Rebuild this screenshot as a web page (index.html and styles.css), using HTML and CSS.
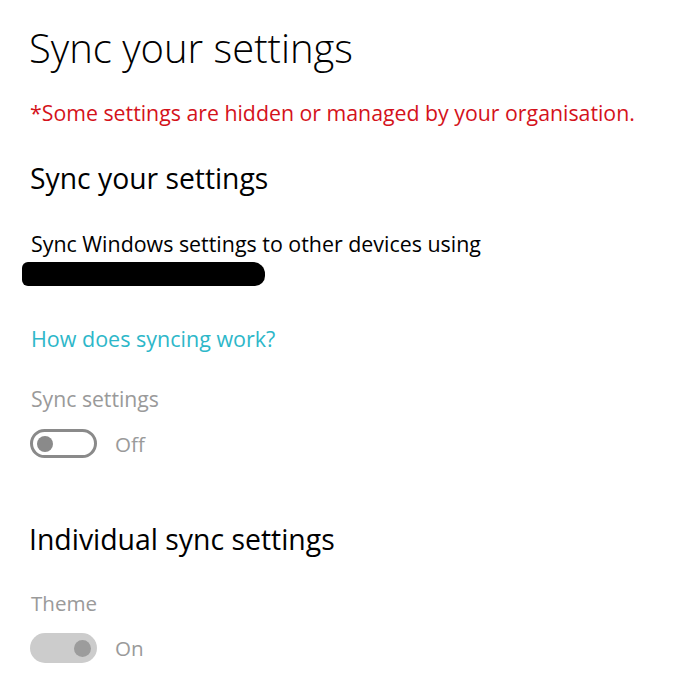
FILE: index.html
```html
<!DOCTYPE html>
<html>
<head>
<meta charset="utf-8">
<link rel="stylesheet" href="styles.css">
</head>
<body>
<main class="page">
  <h1 class="title">Sync your settings</h1>
  <p class="warning">*Some settings are hidden or managed by your organisation.</p>
  <h2 class="section">Sync your settings</h2>
  <p class="desc">Sync Windows settings to other devices using</p>
  <div class="redact"></div>
  <a class="link" href="#">How does syncing work?</a>
  <div class="setting">
    <div class="label">Sync settings</div>
    <div class="toggle-row">
      <span class="toggle off"><span class="knob"></span></span>
      <span class="state">Off</span>
    </div>
  </div>
  <h2 class="section section-2">Individual sync settings</h2>
  <div class="setting setting-theme">
    <div class="label">Theme</div>
    <div class="toggle-row">
      <span class="toggle on"><span class="knob"></span></span>
      <span class="state">On</span>
    </div>
  </div>
</main>
</body>
</html>
```
FILE: styles.css
```css
html, body {
  margin: 0;
  padding: 0;
  background: #ffffff;
}
body {
  font-family: "Open Sans", "Noto Sans", sans-serif;
  color: #000;
}
.page {
  padding: 0 0 0 30px;
  display: flex;
  flex-direction: column;
  align-items: flex-start;
}
.title {
  margin: 24px 0 0 -1px;
  font-weight: 300;
  font-size: 40px;
  line-height: 48px;
}
.warning {
  margin: 27px 0 0 0;
  font-size: 21.3px;
  line-height: 28px;
  color: #d4121b;
}
.section {
  margin: 34px 0 0 0;
  font-weight: 400;
  font-size: 28.3px;
  line-height: 34px;
}
.desc {
  margin: 36px 0 0 1px;
  font-size: 21.4px;
  line-height: 26px;
}
.redact {
  margin: 5px 0 0 -8px;
  width: 243px;
  height: 24px;
  background: #000;
  border-radius: 6px 12px 10px 6px;
}
.link {
  margin: 40px 0 0 1px;
  font-size: 21.5px;
  line-height: 26px;
  color: #2db7c9;
  text-decoration: none;
}
.setting {
  margin-top: 34px;
  display: flex;
  flex-direction: column;
  gap: 17px;
}
.label {
  margin-left: 1px;
  font-size: 21.2px;
  line-height: 26px;
  color: #9a9a9a;
}
.toggle-row {
  display: flex;
  align-items: center;
  gap: 18px;
}
.toggle {
  box-sizing: border-box;
  width: 67px;
  height: 30px;
  border-radius: 15px;
  display: flex;
  align-items: center;
  padding: 0 6px;
}
.toggle.off {
  height: 29px;
  border: 3px solid #8a8a8a;
  justify-content: flex-start;
  padding-left: 4px;
}
.toggle.on {
  background: #cccccc;
  justify-content: flex-end;
  padding-right: 6px;
}
.knob {
  width: 16px;
  height: 16px;
  border-radius: 50%;
}
.off .knob { background: #8a8a8a; }
.on .knob { background: #9c9c9c; width: 17px; height: 17px; }
.state {
  font-size: 20.6px;
  line-height: 26px;
  color: #9a9a9a;
}
.section-2 {
  margin-top: 64px;
  margin-left: -1px;
  font-size: 28.4px;
}
.setting-theme {
  margin-top: 34px;
}
.setting-theme .label {
  font-size: 20.6px;
}
```
